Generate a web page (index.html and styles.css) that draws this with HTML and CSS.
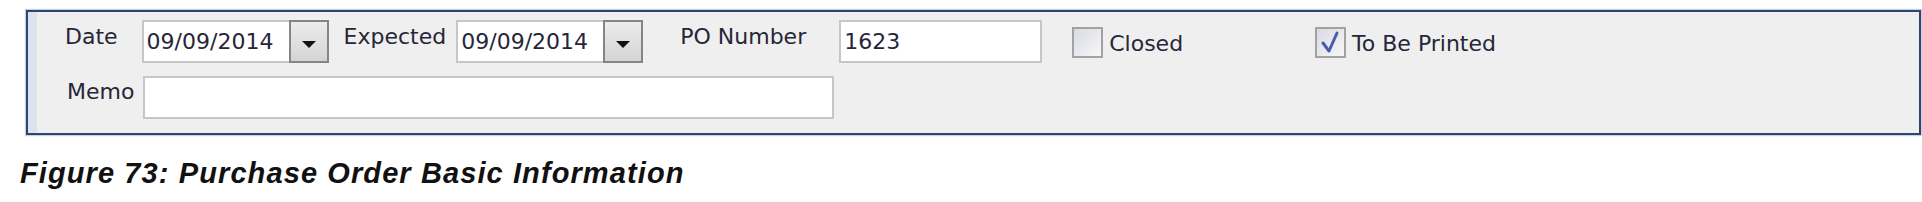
FILE: index.html
```html
<!DOCTYPE html>
<html lang="en">
<head>
  <meta charset="UTF-8" />
  <title>Purchase Order Basic Information</title>
  <link rel="stylesheet" href="styles.css">
</head>
<body>
  <div class="po-panel">
    <div class="po-row">
      <span class="lbl lbl-date">Date</span>
      <div class="date-field">
        <div class="field-text">09/09/2014</div>
        <div class="drop-btn"><span class="arrow"></span></div>
      </div>
      <span class="lbl lbl-expected">Expected</span>
      <div class="date-field">
        <div class="field-text">09/09/2014</div>
        <div class="drop-btn"><span class="arrow"></span></div>
      </div>
      <span class="lbl lbl-po">PO Number</span>
      <div class="text-field po-field">1623</div>
      <label class="check check-closed">
        <span class="box"></span>
        <span class="check-text">Closed</span>
      </label>
      <label class="check check-print">
        <span class="box">
          <svg width="27" height="27" viewBox="0 0 27 27">
            <path d="M6 14 L12 22 L20 4" fill="none" stroke="#4a5cae" stroke-width="3" stroke-linecap="round" stroke-linejoin="round"/>
          </svg>
        </span>
        <span class="check-text">To Be Printed</span>
      </label>
    </div>
    <div class="po-row row-memo">
      <span class="lbl lbl-memo">Memo</span>
      <div class="text-field memo-field"></div>
    </div>
  </div>

  <p class="caption">Figure 73: Purchase Order Basic Information</p>
</body>
</html>
```

FILE: styles.css
```css
body {
  margin: 0;
  background: #ffffff;
  font-family: "DejaVu Sans", sans-serif;
  color: #262638;
}

.po-panel {
  box-sizing: border-box;
  width: 1895px;
  height: 125px;
  margin: 10px 0 0 26px;
  border: 2px solid #2e4574;
  background: linear-gradient(to right, #dde3ee 9px, #efefef 9px);
  padding: 8px 0 0 37px;
  box-shadow: 0 0 1px 1px #c9d0de;
}

.po-row {
  display: flex;
  align-items: flex-start;
  height: 43px;
}

.row-memo {
  margin-top: 13px;
}

.lbl {
  font-size: 22px;
  line-height: 26px;
  margin-top: 4px;
  white-space: nowrap;
}

.lbl-date {
  margin-right: 24px;
}

.lbl-expected {
  margin-left: 15px;
  margin-right: 10px;
}

.lbl-po {
  margin-left: 37px;
  margin-right: 33px;
}

.lbl-memo {
  margin-left: 2px;
  margin-right: 9px;
  margin-top: 3px;
}

.date-field {
  display: flex;
  height: 43px;
}

.field-text,
.text-field {
  box-sizing: border-box;
  height: 43px;
  background: #ffffff;
  border: 2px solid #c6c6c6;
  font-size: 22px;
  line-height: 39px;
  padding-left: 3px;
}

.field-text {
  width: 147px;
  border-right: none;
}

.drop-btn {
  box-sizing: border-box;
  width: 40px;
  height: 43px;
  border: 2px solid #858585;
  background: linear-gradient(#ececec, #d4d4d4);
  display: flex;
  align-items: center;
  justify-content: center;
  padding-top: 5px;
}

.arrow {
  width: 0;
  height: 0;
  border-left: 7px solid transparent;
  border-right: 7px solid transparent;
  border-top: 7px solid #111111;
}

.po-field {
  width: 203px;
}

.memo-field {
  width: 691px;
}

.check {
  display: flex;
  align-items: flex-start;
}

.check-closed {
  margin-left: 30px;
}

.check-print {
  margin-left: 132px;
}

.box {
  box-sizing: border-box;
  width: 31px;
  height: 31px;
  margin-top: 7px;
  border: 2px solid #a2a2a2;
  background: linear-gradient(135deg, #d8dbe2, #f7f7f9);
  display: flex;
  align-items: center;
  justify-content: center;
}

.check-text {
  font-size: 22px;
  line-height: 26px;
  margin-top: 11px;
  margin-left: 6px;
  white-space: nowrap;
}

.caption {
  margin: 22px 0 0 20px;
  font-family: "Liberation Sans", sans-serif;
  font-size: 29px;
  line-height: 32px;
  letter-spacing: 1.1px;
  font-weight: bold;
  font-style: italic;
  color: #111111;
}
```
